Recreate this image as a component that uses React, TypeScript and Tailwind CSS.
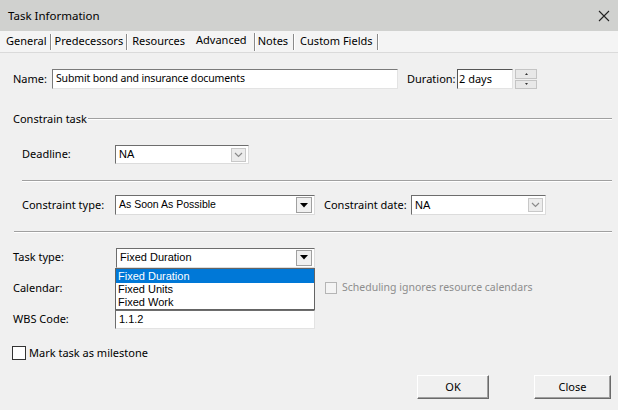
import React from "react";

const ui = { fontFamily: '"Noto Sans", "Open Sans", sans-serif' };
const tah = { fontFamily: '"Liberation Sans", Arial, sans-serif' };

function BlackArrow() {
  return (
    <div className="flex h-[16px] w-[16px] items-center justify-center border border-[#a0a0a0] bg-[#f0f0f0]">
      <svg width="8" height="5" viewBox="0 0 8 5">
        <path d="M0 0 H8 L4 4.5 Z" fill="#000" />
      </svg>
    </div>
  );
}

function Chevron() {
  return (
    <div className="flex h-[14px] w-[15px] items-center justify-center border border-[#c8c8c8] bg-[#ececec]">
      <svg width="9" height="6" viewBox="0 0 9 6">
        <path d="M1 1 L4.5 4.5 L8 1" stroke="#8a8a8a" strokeWidth="1.2" fill="none" />
      </svg>
    </div>
  );
}

function Combo({ w, value, kind, h = 20, size = "text-[11px]" }: { w: number; value: string; kind: "black" | "chev"; h?: number; size?: string }) {
  return (
    <div
      className="flex items-center justify-between border border-t-[#6d6d6d] border-l-[#6d6d6d] border-r-[#dcdcdc] border-b-[#dcdcdc] bg-white pl-[3px] pr-[2px]"
      style={{ width: w, height: h }}
    >
      <span className={size + " text-black"} style={tah}>{value}</span>
      {kind === "black" ? <BlackArrow /> : <Chevron />}
    </div>
  );
}

function Sep({ h = 16 }: { h?: number }) {
  return <div className="w-[1px] bg-[#8a8a8a] shadow-[1px_0_0_#ffffff]" style={{ height: h }} />;
}

export default function App() {
  return (
    <div className="relative flex h-[410px] w-[618px] flex-col overflow-hidden bg-[#f0f0f0] text-black" style={ui}>
      {/* title bar */}
      <div className="flex h-[31px] items-center justify-between bg-[#d0d1cf] pl-[8px] pr-[8px]">
        <span className="text-[11.5px]">Task Information</span>
        <svg width="12" height="12" viewBox="0 0 12 12">
          <path d="M1 1 L11 11 M11 1 L1 11" stroke="#222" strokeWidth="1.1" />
        </svg>
      </div>
      {/* tabs */}
      <div className="flex h-[22px] items-center border-b border-[#dadada] bg-[#f4f4f4] pl-[6px] text-[11px]">
        <span className="pr-[3px]">General</span>
        <Sep />
        <span className="pl-[4px] pr-[3px]">Predecessors</span>
        <Sep />
        <span className="pl-[5px]">Resources</span>
        <span className="mb-[3px] ml-[11px] pr-[7px]">Advanced</span>
        <Sep h={18} />
        <span className="pl-[3px] pr-[5px]">Notes</span>
        <Sep />
        <span className="pl-[6px] pr-[4px]">Custom Fields</span>
        <Sep />
      </div>

      {/* body */}
      <div className="relative flex-1 pl-[13px] pr-[6px]">
        {/* Name row */}
        <div className="mt-[16px] flex h-[20px] items-center">
          <span className="w-[39px] text-[11px]">Name:</span>
          <div className="flex h-[20px] w-[346px] items-center border border-t-[#7a7a7a] border-l-[#7a7a7a] border-r-[#e3e3e3] border-b-[#e3e3e3] bg-white pl-[3px]">
            <span className="text-[10.5px] tracking-[-0.15px]">Submit bond and insurance documents</span>
          </div>
          <span className="ml-[9px] w-[50px] whitespace-nowrap text-[11px]">Duration:</span>
          <div className="flex h-[20px] w-[56px] items-center border border-t-[#555] border-l-[#555] border-r-[#e3e3e3] border-b-[#e3e3e3] bg-white pl-[1px]">
            <span className="text-[11px]">2 days</span>
          </div>
          <div className="ml-[2px] flex h-[20px] w-[22px] flex-col gap-[1px]">
            <div className="flex flex-1 items-center justify-center border border-[#c4c4c4] bg-[#e8e8e8]">
              <svg width="3" height="2" viewBox="0 0 3 2"><path d="M0 2 H3 L1.5 0 Z" fill="#333" /></svg>
            </div>
            <div className="flex flex-1 items-center justify-center border border-[#c4c4c4] bg-[#e8e8e8]">
              <svg width="3" height="2" viewBox="0 0 3 2"><path d="M0 0 H3 L1.5 2 Z" fill="#333" /></svg>
            </div>
          </div>
        </div>

        {/* Constrain task group */}
        <div className="mt-[21px] flex h-[18px] items-center">
          <span className="text-[11px]">Constrain task</span>
          <div className="ml-[1px] h-[2px] flex-1 border-t border-[#a0a0a0] border-b border-b-white" />
        </div>

        {/* Deadline */}
        <div className="mt-[17px] flex h-[19px] items-center pl-[9px]">
          <span className="w-[93px] text-[11px]">Deadline:</span>
          <Combo w={134} h={19} value="NA" kind="chev" />
        </div>

        <div className="ml-[9px] mt-[16px] h-[2px] border-t border-[#a0a0a0] border-b border-b-white" />

        {/* Constraint type */}
        <div className="mt-[13px] flex h-[20px] items-center pl-[9px]">
          <span className="w-[93px] text-[11px]">Constraint type:</span>
          <Combo w={200} value="As Soon As Possible" kind="black" size="text-[10.5px]" />
          <span className="ml-[9px] w-[87px] whitespace-nowrap text-[11px]">Constraint date:</span>
          <Combo w={135} value="NA" kind="chev" />
        </div>

        <div className="ml-[1px] mt-[16px] h-[2px] border-t border-[#a0a0a0] border-b border-b-white" />

        {/* Task type */}
        <div className="mt-[14px] flex h-[21px] items-center">
          <span className="w-[103px] text-[11px]">Task type:</span>
          <Combo w={199} value="Fixed Duration" kind="black" />
        </div>

        {/* Calendar */}
        <div className="mt-[11px] flex h-[18px] items-center">
          <span className="w-[312px] text-[11px]">Calendar:</span>
          <div className="h-[12px] w-[12px] border border-[#b5b5b5] bg-[#f4f4f4]" />
          <span className="ml-[5px] text-[10.5px] text-[#8d8d8d]">Scheduling ignores resource calendars</span>
        </div>

        {/* WBS */}
        <div className="mt-[13px] flex h-[19px] items-center">
          <span className="w-[102px] text-[11px]">WBS Code:</span>
          <div className="flex h-[19px] w-[200px] items-center border border-t-[#6d6d6d] border-l-[#6d6d6d] border-r-[#e3e3e3] border-b-[#e3e3e3] bg-white pl-[3px]">
            <span className="text-[11px]" style={tah}>1.1.2</span>
          </div>
        </div>

        {/* milestone */}
        <div className="mt-[16px] flex h-[16px] items-center">
          <div className="-ml-[1px] h-[14px] w-[14px] border border-[#333] bg-white" />
          <span className="ml-[3px] text-[11px]">Mark task as milestone</span>
        </div>

        {/* buttons */}
        <div className="mt-[14px] flex justify-end gap-[45px] pr-[1px]">
          <div className="flex h-[24px] w-[72px] items-center justify-center border border-t-white border-l-white border-r-[#6a6a6a] border-b-[#6a6a6a] bg-[#f0f0f0] shadow-[inset_-1px_-1px_0_#a0a0a0]">
            <span className="text-[11px]">OK</span>
          </div>
          <div className="flex h-[24px] w-[77px] items-center justify-center border border-t-white border-l-white border-r-[#6a6a6a] border-b-[#6a6a6a] bg-[#f0f0f0] shadow-[inset_-1px_-1px_0_#a0a0a0]">
            <span className="text-[11px]">Close</span>
          </div>
        </div>

        {/* dropdown list overlay */}
        <div className="absolute left-[115px] top-[215px] flex w-[200px] flex-col border border-[#646464] bg-white" style={tah}>
          <div className="flex h-[14px] items-center bg-[#0078d7] pl-[2px] text-[11px] text-white">Fixed Duration</div>
          <div className="flex h-[13px] items-center pl-[2px] text-[11px]">Fixed Units</div>
          <div className="flex h-[13px] items-center pl-[2px] text-[11px]">Fixed Work</div>
        </div>
      </div>
    </div>
  );
}
